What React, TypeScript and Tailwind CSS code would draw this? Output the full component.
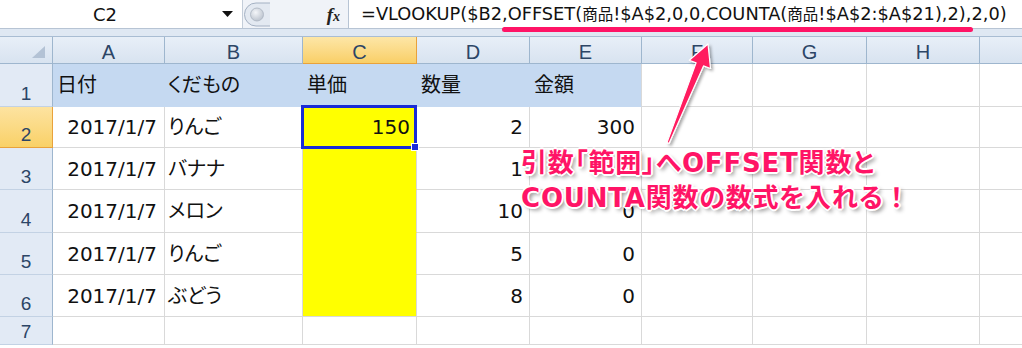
import React from "react";

const CELL_FONT =
  "font-['DejaVu_Sans','Noto_Sans_CJK_JP',sans-serif] [font-feature-settings:'palt']";

// last column is only partly visible, its letter sits outside the window
const COLS = [
  { id: "A", w: "w-[112px]" },
  { id: "B", w: "w-[138px]" },
  { id: "C", w: "w-[114px]" },
  { id: "D", w: "w-[113px]" },
  { id: "E", w: "w-[112px]" },
  { id: "F", w: "w-[111px]" },
  { id: "G", w: "w-[114px]" },
  { id: "H", w: "w-[113px]" },
  { id: "", w: "w-[113px]" },
];

const ROWS = [
  { n: 1, h: "h-[43px]", v: ["日付", "くだもの", "単価", "数量", "金額"] },
  { n: 2, h: "h-[41px]", v: ["2017/1/7", "りんご", "150", "2", "300"] },
  { n: 3, h: "h-[42px]", v: ["2017/1/7", "バナナ", "", "1", ""] },
  { n: 4, h: "h-[43px]", v: ["2017/1/7", "メロン", "", "10", "0"] },
  { n: 5, h: "h-[42px]", v: ["2017/1/7", "りんご", "", "5", "0"] },
  { n: 6, h: "h-[42px]", v: ["2017/1/7", "ぶどう", "", "8", "0"] },
  { n: 7, h: "h-[28px]", v: [] as string[] },
];

const cellClass = (n: number, c: number) => {
  let fill = "bg-white border-r-[#d9d9d9] border-b-[#d9d9d9]";
  if (n === 1 && c < 5) {
    fill =
      c < 4
        ? "bg-[#c5d9f1] border-r-[#c5d9f1] border-b-[#c5d9f1]"
        : "bg-[#c5d9f1] border-r-[#d9d9d9] border-b-[#c5d9f1]";
  } else if (c === 2 && n >= 2 && n <= 6) {
    fill =
      n < 6
        ? "bg-[#ffff00] border-r-[#d9d9d9] border-b-[#ffff00]"
        : "bg-[#ffff00] border-r-[#d9d9d9] border-b-[#d9d9d9]";
  }
  let align = "justify-start pl-[4px]";
  if (n > 1 && c === 0) align = "justify-end pr-[7px]";
  else if (c === 1) align = "justify-start pl-[3px]";
  else if (n > 1 && c >= 2) align = "justify-end pr-[6px]";
  return `${fill} ${align}`;
};

const FormulaBar = () => (
  <div className="flex h-[29px] border-b border-[#b7c4d4] bg-[#f0f3f8]">
    {/* name box */}
    <div className="flex w-[243px] shrink-0 bg-white border-r border-[#c3cdd9]">
      <div className="flex flex-1 items-center justify-center pr-[2px] text-[18px] text-[#111] font-['DejaVu_Sans',sans-serif]">
        C2
      </div>
      <div className="flex w-[30px] items-center justify-center">
        <svg width="11" height="6" viewBox="0 0 11 6">
          <path d="M0 0 H11 L5.5 6 Z" fill="#111" />
        </svg>
      </div>
    </div>
    {/* splitter + fx */}
    <div className="flex w-[105px] shrink-0 items-center">
      <svg width="26" height="27" viewBox="0 0 26 27" className="ml-[1px]">
        <defs>
          <radialGradient id="knob" cx="0.4" cy="0.35" r="0.7">
            <stop offset="0" stopColor="#f4f6f9" />
            <stop offset="1" stopColor="#b9c1cc" />
          </radialGradient>
        </defs>
        <path d="M26 2 H12 A11.5 11.5 0 0 0 12 25 H26" fill="#e3e9f1" stroke="#a4b1c3" />
        <circle cx="13" cy="13.5" r="6.5" fill="url(#knob)" stroke="#aab3bf" strokeWidth="0.8" />
      </svg>
      <div className="ml-auto mr-[8px] font-['Liberation_Serif',serif] text-[19px] font-bold italic leading-none text-[#222]">
        f<span className="text-[14px]">x</span>
      </div>
    </div>
    {/* formula */}
    <div className="flex flex-1 items-center bg-white border-l border-[#b7c4d4] pl-[12px] whitespace-nowrap text-[17.8px] text-[#111] font-['DejaVu_Sans',sans-serif]">
      =VLOOKUP($B2,OFFSET(
      <span className="font-['Noto_Sans_CJK_JP',sans-serif] text-[15.5px]">商品</span>
      !$A$2,0,0,COUNTA(
      <span className="font-['Noto_Sans_CJK_JP',sans-serif] text-[15.5px]">商品</span>
      !$A$2:$A$21),2),2,0)
    </div>
  </div>
);

const HeaderRow = () => (
  <div className="flex h-[27px] font-['Liberation_Sans',sans-serif] text-[20px] text-[#2c4566]">
    <div className="relative w-[53px] shrink-0 bg-linear-to-b from-[#e8eff8] to-[#d8e3f0] border-r border-b border-[#9eb6ce]">
      <svg width="53" height="27" viewBox="0 0 53 27" className="absolute left-0 top-0">
        <polygon points="32,21 45,21 45,9" fill="#b3c2d5" />
      </svg>
    </div>
    {COLS.map((c, i) =>
      c.id === "C" ? (
        <div
          key={i}
          className={`${c.w} shrink-0 flex items-center justify-center pt-[3px] bg-linear-to-b from-[#fde6a6] to-[#f9cf66] border-r border-b border-[#e9a23b]`}
        >
          {c.id}
        </div>
      ) : (
        <div
          key={i}
          className={`${c.w} shrink-0 flex items-center justify-center pt-[3px] bg-linear-to-b from-[#e8eff8] to-[#d8e3f0] border-r border-b border-[#9eb6ce]`}
        >
          {c.id}
        </div>
      )
    )}
  </div>
);

const App = () => {
  return (
    <div className="relative h-[348px] w-[1022px] overflow-hidden bg-white">
      <FormulaBar />
      <div className="h-[8px] bg-[#dfe8f3] border-b border-[#a9bdd3]" />
      <HeaderRow />

      {ROWS.map((r) => (
        <div key={r.n} className={`flex ${r.h}`}>
          {r.n === 2 ? (
            <div className="flex w-[53px] shrink-0 items-end justify-center pb-[3px] bg-linear-to-b from-[#fde3a0] to-[#f9d166] border-r border-b border-[#e9a23b] font-['Liberation_Sans',sans-serif] text-[19px] leading-none text-[#2c4566]">
              {r.n}
            </div>
          ) : (
            <div className="flex w-[53px] shrink-0 items-end justify-center pb-[3px] bg-[#e2eaf5] border-r border-r-[#9eb6ce] border-b border-b-[#c3d2e4] font-['Liberation_Sans',sans-serif] text-[19px] leading-none text-[#2c4566]">
              {r.n}
            </div>
          )}
          {COLS.map((c, ci) => (
            <div
              key={ci}
              className={`relative ${c.w} shrink-0 flex items-center border-r border-b ${CELL_FONT} text-[20px] leading-[24px] text-[#111] ${cellClass(r.n, ci)}`}
            >
              {r.v[ci] ?? ""}
              {r.n === 2 && ci === 2 && (
                <div className="absolute -left-[2px] -top-[2px] -right-[1px] -bottom-[2px] z-10 border-[3px] border-[#1a2bd6]">
                  <div className="absolute -right-[5px] -bottom-[5px] h-[8px] w-[8px] bg-[#1a2bd6] border border-white" />
                </div>
              )}
            </div>
          ))}
        </div>
      ))}

      {/* underline under the OFFSET part of the formula */}
      <div className="absolute left-[502px] top-[27px] h-[5px] w-[471px] rounded-full bg-[#ff1466]" />

      {/* arrow */}
      <svg
        className="pointer-events-none absolute left-0 top-0"
        width="1022"
        height="348"
        viewBox="0 0 1022 348"
      >
        <defs>
          <filter id="sh" x="-20%" y="-20%" width="140%" height="140%">
            <feDropShadow dx="2" dy="2" stdDeviation="1.5" floodColor="#000" floodOpacity="0.35" />
          </filter>
        </defs>
        <polygon
          points="708,44 710.5,68.5 703.5,65.9 669,143.4 667,142.6 696.1,62.9 689.3,60.2"
          fill="#ff1a5e"
          stroke="#ffffff"
          strokeWidth="1.2"
          strokeLinejoin="round"
          filter="url(#sh)"
        />
      </svg>

      {/* callout */}
      <div className="absolute left-[521px] top-[146px] whitespace-nowrap font-['DejaVu_Sans','Noto_Sans_CJK_JP',sans-serif] [font-feature-settings:'palt'] text-[26px] font-bold leading-[35px] tracking-[0.8px] text-[#ff1466] [text-shadow:-1px_-1px_0_#fff,1px_-1px_0_#fff,-1px_1px_0_#fff,1px_1px_0_#fff,0_-2px_0_#fff,0_2px_0_#fff,-2px_0_0_#fff,2px_0_0_#fff,3px_3px_4px_rgba(0,0,0,0.45)]">
        <div>引数「範囲」へOFFSET関数と</div>
        <div>
          COUNTA関数の数式を入れる<span className="[font-feature-settings:normal]">！</span>
        </div>
      </div>
    </div>
  );
};

export default App;
